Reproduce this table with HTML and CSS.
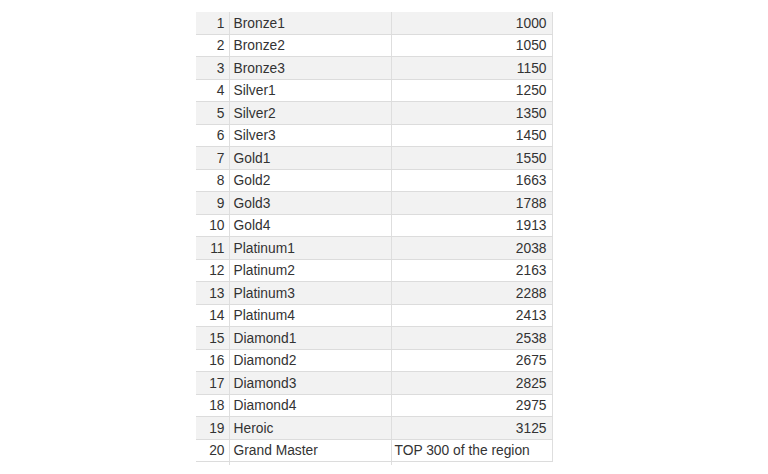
FILE: index.html
```html
<!DOCTYPE html>
<html>
<head>
<meta charset="utf-8">
<link rel="stylesheet" href="styles.css">
</head>
<body>
<table class="ranks">
<colgroup><col class="c-idx"><col class="c-name"><col class="c-val"></colgroup>
<tbody>
<tr><td class="idx">1</td><td class="name">Bronze1</td><td class="val">1000</td></tr>
<tr><td class="idx">2</td><td class="name">Bronze2</td><td class="val">1050</td></tr>
<tr><td class="idx">3</td><td class="name">Bronze3</td><td class="val">1150</td></tr>
<tr><td class="idx">4</td><td class="name">Silver1</td><td class="val">1250</td></tr>
<tr><td class="idx">5</td><td class="name">Silver2</td><td class="val">1350</td></tr>
<tr><td class="idx">6</td><td class="name">Silver3</td><td class="val">1450</td></tr>
<tr><td class="idx">7</td><td class="name">Gold1</td><td class="val">1550</td></tr>
<tr><td class="idx">8</td><td class="name">Gold2</td><td class="val">1663</td></tr>
<tr><td class="idx">9</td><td class="name">Gold3</td><td class="val">1788</td></tr>
<tr><td class="idx">10</td><td class="name">Gold4</td><td class="val">1913</td></tr>
<tr><td class="idx">11</td><td class="name">Platinum1</td><td class="val">2038</td></tr>
<tr><td class="idx">12</td><td class="name">Platinum2</td><td class="val">2163</td></tr>
<tr><td class="idx">13</td><td class="name">Platinum3</td><td class="val">2288</td></tr>
<tr><td class="idx">14</td><td class="name">Platinum4</td><td class="val">2413</td></tr>
<tr><td class="idx">15</td><td class="name">Diamond1</td><td class="val">2538</td></tr>
<tr><td class="idx">16</td><td class="name">Diamond2</td><td class="val">2675</td></tr>
<tr><td class="idx">17</td><td class="name">Diamond3</td><td class="val">2825</td></tr>
<tr><td class="idx">18</td><td class="name">Diamond4</td><td class="val">2975</td></tr>
<tr><td class="idx">19</td><td class="name">Heroic</td><td class="val">3125</td></tr>
<tr><td class="idx">20</td><td class="name">Grand Master</td><td class="val text">TOP 300 of the region</td></tr>
<tr class="tail"><td></td><td></td><td></td></tr>
</tbody>
</table>
</body>
</html>
```

FILE: styles.css
```css
html, body {
  margin: 0;
  padding: 0;
  background: #ffffff;
}
body {
  padding: 12px 0 0 196px;
  font-family: "Liberation Sans", Arial, sans-serif;
  font-size: 13.8px;
  color: #333333;
}
.ranks {
  border-collapse: collapse;
  table-layout: fixed;
  width: 356px;
}
.c-idx { width: 33px; }
.c-name { width: 162px; }
.c-val { width: 161px; }
.ranks td {
  height: 19.5px;
  padding: 2px 0 0 0;
  line-height: 16px;
  border-bottom: 1px solid #dcdcdc;
  border-right: 1px solid #dedede;
  white-space: nowrap;
  vertical-align: middle;
}
.ranks tr:nth-child(odd) td {
  background: #f2f2f2;
}
.ranks tr.tail td {
  background: transparent;
  height: 3px;
  padding: 0;
  border-bottom: none;
}
.ranks tr.tail td:last-child { border-right: none; }
.idx {
  text-align: right;
  padding-right: 4px !important;
}
.name {
  text-align: left;
  padding-left: 4px !important;
}
.val {
  text-align: right;
  padding-right: 5px !important;
}
.val.text {
  text-align: left;
  padding-left: 3px !important;
}
```
